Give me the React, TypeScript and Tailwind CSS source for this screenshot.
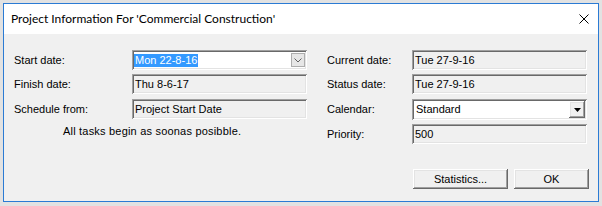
export default function App() {
  const sunken =
    "shadow-[inset_1px_1px_0_#a0a0a0,inset_-1px_-1px_0_#ffffff,inset_2px_2px_0_#696969,inset_-2px_-2px_0_#e3e3e3]";
  const raised =
    "shadow-[inset_-1px_-1px_0_#696969,inset_1px_1px_0_#ffffff,inset_-2px_-2px_0_#a0a0a0,inset_2px_2px_0_#e3e3e3]";

  return (
    <div className="w-[602px] h-[206px] bg-[#e2e2e2] pt-[3px] pl-[3px] font-['Liberation_Sans',Arial,sans-serif] text-[11px] text-black overflow-hidden">
      <div className="w-[596px] h-[199px] border border-[#2b7bd4] bg-[#f0f0f0] flex flex-col">
        <div className="h-[30px] bg-white flex items-center justify-between pl-[7px] pr-[9px]">
          <span className="text-[12px] font-['Lato',sans-serif]">
            Project Information For 'Commercial Construction'
          </span>
          <svg width="10" height="10" viewBox="0 0 10 10">
            <path d="M0.5 0.5L9.5 9.5M9.5 0.5L0.5 9.5" stroke="#000" strokeWidth="1" fill="none" />
          </svg>
        </div>
        <div className="flex-1 flex flex-col pl-[10px] pt-[16px] pr-[9px]">
          <div className="flex">
            <div className="w-[293px] flex flex-col">
              <div className="flex items-center h-[20px]">
                <span className="w-[118px]">Start date:</span>
                <div className={`w-[175px] h-[20px] bg-white flex items-center pl-[2px] pr-[2px] ${sunken}`}>
                  <span className="bg-[#3399ff] text-white h-[13px] leading-[13px] px-[1px]">Mon 22-8-16</span>
                  <div className="ml-auto w-[14px] h-[14px] bg-[#e6e6e6] border border-[#adadad] flex items-center justify-center">
                    <svg width="8" height="5" viewBox="0 0 8 5">
                      <path d="M0.5 0.5L4 4L7.5 0.5" stroke="#606060" strokeWidth="1" fill="none" />
                    </svg>
                  </div>
                </div>
              </div>
              <div className="flex items-center h-[20px] mt-[4px]">
                <span className="w-[118px]">Finish date:</span>
                <div className={`w-[175px] h-[20px] bg-[#f0f0f0] flex items-center pl-[3px] ${sunken}`}>
                  Thu 8-6-17
                </div>
              </div>
              <div className="flex items-center h-[20px] mt-[5px]">
                <span className="w-[118px]">Schedule from:</span>
                <div className={`w-[175px] h-[20px] bg-[#f0f0f0] flex items-center pl-[3px] ${sunken}`}>
                  Project Start Date
                </div>
              </div>
              <div className="h-[14px] leading-[14px] mt-[5px] ml-[49px] tracking-[0.2px]">
                All tasks begin as soonas posibble.
              </div>
            </div>
            <div className="ml-[20px] flex flex-col">
              <div className="flex items-center h-[20px]">
                <span className="w-[85px]">Current date:</span>
                <div className={`w-[175px] h-[20px] bg-[#f0f0f0] flex items-center pl-[3px] ${sunken}`}>
                  Tue 27-9-16
                </div>
              </div>
              <div className="flex items-center h-[20px] mt-[4px]">
                <span className="w-[85px]">Status date:</span>
                <div className={`w-[175px] h-[20px] bg-[#f0f0f0] flex items-center pl-[3px] ${sunken}`}>
                  Tue 27-9-16
                </div>
              </div>
              <div className="flex items-center h-[21px] mt-[5px]">
                <span className="w-[85px]">Calendar:</span>
                <div className={`w-[175px] h-[21px] bg-white flex items-center pl-[4px] pr-[2px] ${sunken}`}>
                  Standard
                  <div className={`ml-auto w-[16px] h-[17px] bg-[#f0f0f0] flex items-center justify-center ${raised}`}>
                    <svg width="7" height="4" viewBox="0 0 7 4">
                      <path d="M0 0H7L3.5 4Z" fill="#000" />
                    </svg>
                  </div>
                </div>
              </div>
              <div className="flex items-center h-[20px] mt-[4px]">
                <span className="w-[85px]">Priority:</span>
                <div className={`w-[175px] h-[20px] bg-[#f0f0f0] flex items-center pl-[3px] ${sunken}`}>
                  500
                </div>
              </div>
            </div>
          </div>
          <div className="flex justify-end gap-[6px] mt-[25px]">
            <button className={`w-[95px] h-[20px] bg-[#f0f0f0] flex items-center justify-center ${raised}`}>
              Statistics...
            </button>
            <button className={`w-[75px] h-[20px] bg-[#f0f0f0] flex items-center justify-center ${raised}`}>
              OK
            </button>
          </div>
        </div>
      </div>
    </div>
  );
}
